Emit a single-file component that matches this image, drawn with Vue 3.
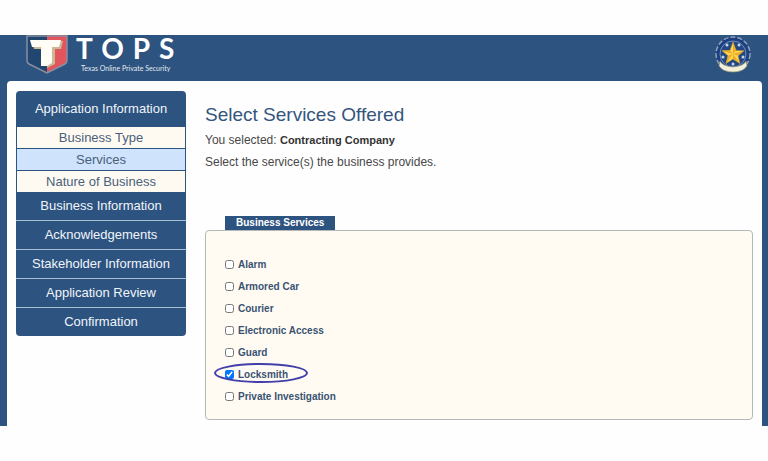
<script setup>
import { ref } from 'vue'

// Submenu of the section that is open
const subItems = ['Business Type', 'Services', 'Nature of Business']
const currentItem = ref('Services')

const sections = [
  'Business Information',
  'Acknowledgements',
  'Stakeholder Information',
  'Application Review',
  'Confirmation'
]

const services = [
  { id: 'alarm', label: 'Alarm' },
  { id: 'armored', label: 'Armored Car' },
  { id: 'courier', label: 'Courier' },
  { id: 'electronic', label: 'Electronic Access' },
  { id: 'guard', label: 'Guard' },
  { id: 'locksmith', label: 'Locksmith' },
  { id: 'investigation', label: 'Private Investigation' }
]
const selected = ref(['locksmith'])
</script>

<template>
  <div class="page">
    <header class="top-bar">
      <div class="brand">
        <svg class="shield" viewBox="0 0 42 40" aria-hidden="true">
          <path d="M1 0H21V38L3 29Q1 28 1 25Z" fill="#21466f" />
          <path d="M21 0H41V25Q41 28 39 29L21 38Z" fill="#e2555c" />
          <path d="M1 1V25Q1 28 3 29L21 38L39 29Q41 28 41 25V1Z" fill="none" stroke="#8790a0" stroke-width="1.5" />
          <path d="M6 6H37L35 14H29V29L21 33V14H8Z" fill="#cdb796" />
          <path d="M4 5H35L33 12H26V28L21 31H15V12H6Z" fill="#fffdf5" />
        </svg>
        <div class="brand-text">
          <span class="brand-name">TOPS</span>
          <span class="brand-sub">Texas Online Private Security</span>
        </div>
      </div>
      <svg class="seal" viewBox="0 0 40 40" aria-hidden="true">
        <circle cx="20" cy="19" r="17" fill="#1f3f83" stroke="#8fa3b5" stroke-width="1.5" stroke-dasharray="5 2" />
        <circle cx="20" cy="19" r="13" fill="#234785" stroke="#6f91bd" stroke-width="1" />
        <g fill="#c7d5e4">
          <circle cx="14" cy="10" r="1.5" />
          <circle cx="26" cy="10" r="1.5" />
          <circle cx="10" cy="22" r="1.5" />
          <circle cx="30" cy="22" r="1.5" />
          <circle cx="20" cy="29" r="1.5" />
        </g>
        <path d="M20 7L23 15.4L31 15.7L25 20.7L27 28.5L20 24L13 28.5L15 20.7L9 15.7L17 15.4Z" fill="#ffd94a" stroke="#b99339" stroke-width=".6" />
        <path d="M20 7V19L23 15.4ZM31 15.7L20 19L25 20.7ZM27 28.5L20 19V24ZM13 28.5L20 19L15 20.7ZM9 15.7L20 19L17 15.4Z" fill="#eda92c" />
        <path d="M7 26Q9 31 20 32Q31 31 33 26L34 31Q30 37 20 37Q10 37 6 31Z" fill="#f2f0dc" stroke="#8d8f68" stroke-width=".7" />
      </svg>
    </header>

    <div class="panel">
      <nav class="side-nav">
        <a href="#" class="nav-head">Application Information</a>
        <div class="sub-nav">
          <a
            v-for="item in subItems"
            :key="item"
            href="#"
            :class="{ active: item === currentItem }"
            @click.prevent="currentItem = item"
          >{{ item }}</a>
        </div>
        <a v-for="section in sections" :key="section" href="#" class="nav-item">{{ section }}</a>
      </nav>

      <main class="content">
        <h1>Select Services Offered</h1>
        <p>You selected: <strong>Contracting Company</strong></p>
        <p>Select the service(s) the business provides.</p>

        <section class="services" aria-labelledby="services-title">
          <h2 id="services-title">Business Services</h2>
          <div class="service-list">
            <div v-for="service in services" :key="service.id" class="service">
              <input :id="service.id" v-model="selected" type="checkbox" :value="service.id">
              <label :for="service.id">{{ service.label }}</label>
              <svg v-if="service.id === 'locksmith'" class="marker" viewBox="0 0 96 20" aria-hidden="true">
                <ellipse cx="48" cy="10" rx="46" ry="9" fill="none" stroke="#413fa9" stroke-width="2" />
              </svg>
            </div>
          </div>
        </section>
      </main>
    </div>
  </div>
</template>

<style>
body {
  background: #fefefe;
}
</style>

<style scoped>
.page {
  margin-top: 35px;
  padding: 0 6px 0 7px;
  background: #2d5380;
  font-family: "Liberation Sans", Arial, sans-serif;
}

.top-bar {
  display: flex;
  justify-content: space-between;
  align-items: flex-start;
  height: 46px;
  padding: 0 9px 0 19px;
}

.brand {
  display: flex;
  gap: 8px;
}

.shield {
  width: 42px;
  height: 40px;
}

.brand-text {
  display: flex;
  flex-direction: column;
  font-family: Lato, sans-serif;
  color: #fff;
}

.brand-name {
  font-size: 28px;
  font-weight: 700;
  line-height: 27px;
  letter-spacing: 9px;
}

.brand-sub {
  padding-left: 5px;
  font-size: 7px;
  line-height: 13px;
  color: #e3eaf1;
}

.seal {
  width: 40px;
  height: 40px;
}

.panel {
  display: flex;
  align-items: flex-start;
  gap: 19px;
  padding: 10px 9px 6px;
  background: #fefefe;
  border-radius: 4px 4px 0 0;
}

.side-nav {
  flex: 0 0 170px;
  overflow: hidden;
  border-radius: 4px;
  background: #2d5380;
  text-align: center;
  font-size: 13px;
}

.side-nav a {
  display: block;
  color: #f1f5fa;
  text-decoration: none;
}

.side-nav .nav-head {
  line-height: 36px;
}

.sub-nav {
  display: flex;
  flex-direction: column;
  gap: 1px;
  padding: 0 1px;
}

.side-nav .sub-nav a {
  line-height: 21px;
  color: #47617d;
  background: #fffaf1;
}

.side-nav .sub-nav a.active {
  background: #cfe3fc;
}

.nav-item {
  line-height: 28px;
}

.nav-item + .nav-item {
  border-top: 1px solid #a9bdd3;
}

.content {
  flex: 1;
  min-width: 0;
  color: #484848;
}

h1 {
  margin: 13px 0 6px;
  font-size: 19px;
  font-weight: 400;
  line-height: 22px;
  color: #34557d;
}

p {
  margin: 0 0 6px;
  font-size: 12px;
  line-height: 16px;
}

p strong {
  font-size: 11px;
  color: #333;
}

.services {
  margin-top: 46px;
}

h2 {
  width: max-content;
  margin: 0 0 0 20px;
  padding: 0 11px;
  font-size: 10px;
  line-height: 14px;
  color: #fff;
  background: #2d5380;
}

.service-list {
  padding: 22px 18px 12px;
  border: 1px solid #b5b7b8;
  border-radius: 4px;
  background: #fffbf3;
}

.service {
  position: relative;
  display: flex;
  align-items: center;
  gap: 4px;
  height: 22px;
  font-size: 10px;
  font-weight: 700;
  color: #3a5372;
}

.service input {
  width: 9px;
  height: 9px;
  margin: 0 0 0 1px;
}

/* Hand-drawn ring around the chosen service */
.marker {
  position: absolute;
  left: -11px;
  top: 0;
  width: 96px;
  height: 20px;
}
</style>
